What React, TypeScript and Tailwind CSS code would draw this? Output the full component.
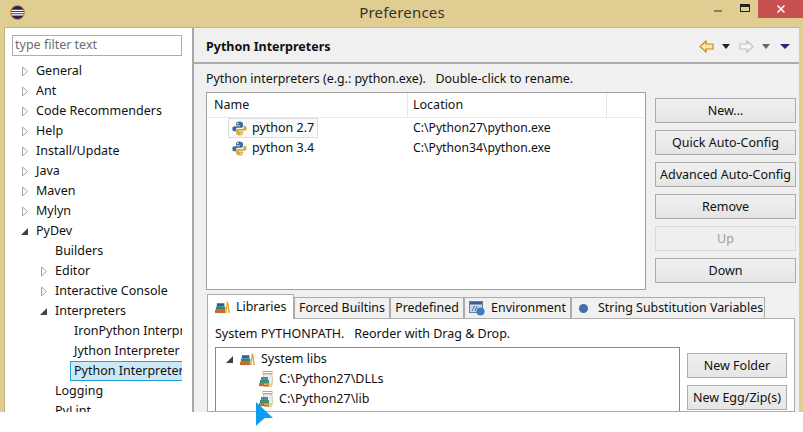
import React from "react";
import { X } from "lucide-react";

const font = "font-['Noto_Sans','Open_Sans',sans-serif]";

const Closed = () => (
  <svg width="6" height="11" viewBox="0 0 6 11" className="shrink-0">
    <path d="M0.5 1 L5.5 5.5 L0.5 10 Z" fill="#fff" stroke="#a6a6a6" />
  </svg>
);

const Open = () => (
  <svg width="7" height="7" viewBox="0 0 7 7" className="shrink-0">
    <path d="M0 7 L7 0 L7 7 Z" fill="#404040" />
  </svg>
);

const PythonIcon = () => (
  <svg width="15" height="15" viewBox="0 0 15 15" className="shrink-0">
    <path d="M7.5 0.5 C4.5 0.5 4 1.6 4 3 V4.5 H8 V5.2 H2.6 C1 5.2 0.3 6.2 0.3 7.7 C0.3 9.3 1 10.3 2.4 10.3 H4 V8.6 C4 7.4 5 6.8 6 6.8 H9.2 C10.2 6.8 11 6 11 5 V3 C11 1.4 9.5 0.5 7.5 0.5 Z" fill="#3d6e99" />
    <path d="M7.5 14.5 C10.5 14.5 11 13.4 11 12 V10.5 H7 V9.8 H12.4 C14 9.8 14.7 8.8 14.7 7.3 C14.7 5.7 14 4.7 12.6 4.7 H11.6 V6.4 C11.6 7.6 10.4 8 9.4 8 H5.8 C4.8 8 4 9 4 10 V12 C4 13.6 5.5 14.5 7.5 14.5 Z" fill="#d8aa45" />
    <circle cx="5.7" cy="2.5" r="0.8" fill="#fff" />
    <circle cx="9.3" cy="12.5" r="0.8" fill="#fff" />
  </svg>
);

const BooksIcon = () => (
  <svg width="15" height="14" viewBox="0 0 16 14" className="shrink-0">
    <rect x="0" y="10" width="11" height="3.5" fill="#c8693a" />
    <rect x="1" y="6.5" width="10" height="3.5" fill="#2f8a6a" />
    <rect x="2" y="3" width="8" height="3.5" fill="#2d5f96" />
    <path d="M11 13.5 L12.5 1 L14 1 L16 13.5 H14.4 L13 5 L12.5 13.5 Z" fill="#e2a92e" />
  </svg>
);

const JarIcon = () => (
  <svg width="14" height="16" viewBox="0 0 14 16" className="shrink-0">
    <rect x="4" y="0.5" width="9" height="2" fill="#fff" stroke="#d2a345" />
    <path d="M4.5 3 H12.5 C13.8 6 13.8 12 12.5 15.5 H5 Z" fill="#e6edf3" stroke="#c9b070" strokeWidth="0.7" />
    <rect x="2" y="6" width="7" height="3" fill="#5a82ad" />
    <rect x="1" y="9" width="9" height="3" fill="#3f8f74" />
    <rect x="0" y="12" width="10" height="3.2" fill="#c8693a" />
    <rect x="5" y="12.6" width="7.5" height="1.2" fill="#e9b95c" />
  </svg>
);

const EnvIcon = () => (
  <svg width="16" height="15" viewBox="0 0 16 15" className="shrink-0">
    <rect x="0.5" y="0.5" width="13" height="11" fill="#c9d6e6" stroke="#6d7f9c" />
    <rect x="1" y="1" width="12" height="2.5" fill="#3d5f96" />
    <path d="M3 10 L5.5 5 M6 10 L8 5" stroke="#4a6a9a" />
    <circle cx="11.5" cy="10.5" r="4" fill="#3b7cc0" />
  </svg>
);

const ArrowIcon = ({ flip, active }: { flip?: boolean; active?: boolean }) => (
  <svg width="15" height="13" viewBox="0 0 15 13" className={flip ? "-scale-x-100" : ""}>
    <path
      d="M1 6.5 L7 1 V4 H14 V9 H7 V12 Z"
      fill={active ? "#fde6a8" : "#f6f6f6"}
      stroke={active ? "#c98a1e" : "#c0c0c0"}
      strokeWidth="1.2"
    />
  </svg>
);

const Caret = ({ color, w = 8 }: { color: string; w?: number }) => (
  <svg width={w} height="5" viewBox="0 0 8 5" preserveAspectRatio="none">
    <path d="M0 0 H8 L4 5 Z" fill={color} />
  </svg>
);

const Btn = ({ label, disabled, w = "w-[141px]" }: { label: string; disabled?: boolean; w?: string }) => (
  <div
    className={`${w} h-[25px] shrink-0 pt-[2px] flex items-center justify-center border border-[#acacac] text-[12.5px] ${
      disabled ? "bg-[#efefef] border-[#d9d9d9] text-[#a0a0a0]" : "bg-gradient-to-b from-[#f0f0f0] to-[#e5e5e5] text-[#111]"
    }`}
  >
    {label}
  </div>
);

const TreeRow = ({
  label,
  level,
  state,
  selected,
}: {
  label: string;
  level: number;
  state?: "open" | "closed";
  selected?: boolean;
}) => (
  <div className="h-5 flex items-center text-[12.5px] text-[#111] whitespace-nowrap">
    <div className={level === 0 ? "w-[31px] shrink-0 flex justify-end pr-[3px]" : level === 1 ? "w-[50px] shrink-0 flex justify-end pr-[3px]" : "w-[69px] shrink-0"}>
      {state === "closed" && <Closed />}
      {state === "open" && <Open />}
    </div>
    <div
      className={
        selected
          ? "h-5 ml-[1px] pl-[3px] w-[112px] shrink-0 bg-[#cbe8f6] border border-[#26a0da] border-r-0 flex items-center"
          : "pl-[5px]"
      }
    >
      {label}
    </div>
  </div>
);

const Tab = ({ children, active, w, left }: { children: React.ReactNode; active?: boolean; w: string; left?: boolean }) => (
  <div
    className={`${w} flex items-center border border-[#acacac] border-b-0 whitespace-nowrap text-[12.4px] text-[#111] ${
      active
        ? "h-[25px] gap-[6px] bg-white pl-[7px] relative z-10"
        : `h-[22px] gap-[6px] bg-[#f0f0f0] mt-[3px] border-b ${left ? "pl-[7px]" : "justify-center"}`
    }`}
  >
    {children}
  </div>
);

export default function App() {
  return (
    <div className={`${font} w-[803px] h-[432px] relative overflow-hidden bg-white`}>
      <div className="h-[412px] bg-[#e0cd92] flex flex-col overflow-hidden">
        {/* title bar */}
        <div className="h-[27px] shrink-0 flex items-start">
          <div className="pl-[10px] pt-[5px] w-[90px]">
            <svg width="15" height="15" viewBox="0 0 15 15">
              <circle cx="7.5" cy="7.5" r="7" fill="#2c2255" stroke="#e79b35" strokeWidth="0.8" />
              <rect x="1.5" y="4.8" width="12" height="1.3" fill="#fff" />
              <rect x="1" y="7" width="13" height="1.3" fill="#fff" />
              <rect x="1.5" y="9.2" width="12" height="1.3" fill="#fff" />
            </svg>
          </div>
          <div className="flex-1 text-center text-[15px] leading-[25px] text-[#333] tracking-[0.2px]">Preferences</div>
          <div className="w-[8px] h-[2px] bg-[#8c7d55] mt-[10px]" />
          <div className="w-[10px] h-[8px] ml-[18px] mt-[4px] border border-t-[3px] border-[#222]" />
          <div className="w-[45px] h-[18px] ml-[8px] bg-[#c75050] flex items-center justify-center">
            <X size={12} strokeWidth={3} color="#fff" />
          </div>
        </div>

        {/* client area */}
        <div className="flex-1 flex ml-[4px] mr-[4px] border-t border-l border-[#c2b27f] min-h-0">
          {/* left tree */}
          <div className="w-[189px] shrink-0 bg-white border-r-2 border-[#a9a9a9] pt-[7px] pl-[7px] pr-[10px] overflow-hidden">
            <div className="h-[21px] border border-[#acacac] flex items-center pl-[2px] text-[12.5px] text-[#6d6d6d]">
              type filter text
            </div>
            <div className="mt-[5px] -ml-[12px] overflow-hidden w-[182px]">
              <TreeRow label="General" level={0} state="closed" />
              <TreeRow label="Ant" level={0} state="closed" />
              <TreeRow label="Code Recommenders" level={0} state="closed" />
              <TreeRow label="Help" level={0} state="closed" />
              <TreeRow label="Install/Update" level={0} state="closed" />
              <TreeRow label="Java" level={0} state="closed" />
              <TreeRow label="Maven" level={0} state="closed" />
              <TreeRow label="Mylyn" level={0} state="closed" />
              <TreeRow label="PyDev" level={0} state="open" />
              <TreeRow label="Builders" level={1} />
              <TreeRow label="Editor" level={1} state="closed" />
              <TreeRow label="Interactive Console" level={1} state="closed" />
              <TreeRow label="Interpreters" level={1} state="open" />
              <TreeRow label="IronPython Interpreter" level={2} />
              <TreeRow label="Jython Interpreter" level={2} />
              <TreeRow label="Python Interpreter" level={2} selected />
              <TreeRow label="Logging" level={1} />
              <TreeRow label="PyLint" level={1} />
            </div>
          </div>

          {/* right page */}
          <div className="flex-1 min-w-0 bg-[#f0f0f0] flex flex-col">
            <div className="h-[36px] shrink-0 border-b-2 border-[#acacac] flex items-center pl-[12px] pr-[9px]">
              <div className="flex-1 font-bold text-[12.5px] text-[#111] pt-[4px]">Python Interpreters</div>
              <div className="flex items-center pt-[2px]">
                <ArrowIcon active />
                <div className="ml-[8px]"><Caret color="#222" /></div>
                <div className="ml-[9px]"><ArrowIcon flip /></div>
                <div className="ml-[8px]"><Caret color="#666" /></div>
                <div className="ml-[10px]"><Caret color="#3a2277" w={10} /></div>
              </div>
            </div>

            <div className="pl-[12px] pr-[3px] pt-[5px] flex-1 min-h-0 flex flex-col">
              <div className="h-[20px] flex items-center text-[12.4px] text-[#111] whitespace-pre">
                Python interpreters (e.g.: python.exe).   Double-click to rename.
              </div>
              <div className="flex mt-[3px] gap-[9px] shrink-0">
                <div className="w-[440px] h-[198px] bg-white border border-[#9f9f9f] text-[12.5px] text-[#111]">
                  <div className="h-[25px] flex items-center border-b border-[#e5ebf2]">
                    <div className="w-[201px] pl-[7px] pt-[1px] h-full flex items-center border-r border-[#e5e5e5]">Name</div>
                    <div className="w-[199px] pl-[5px] pt-[1px] h-full flex items-center border-r border-[#e5e5e5]">Location</div>
                  </div>
                  <div>
                    <div className="h-5 flex items-center">
                      <div className="w-[202px] pl-[21px] flex items-center">
                        <div className="h-5 flex items-center gap-[5px] pl-[3px] pr-[3px] bg-[#fafafa] border border-[#dedede]">
                          <PythonIcon />
                          <span>python 2.7</span>
                        </div>
                      </div>
                      <div className="pl-[4px] text-[12.2px]">C:\Python27\python.exe</div>
                    </div>
                    <div className="h-5 flex items-center">
                      <div className="w-[202px] pl-[25px] flex items-center gap-[5px]">
                        <PythonIcon />
                        <span>python 3.4</span>
                      </div>
                      <div className="pl-[4px] text-[12.2px]">C:\Python34\python.exe</div>
                    </div>
                  </div>
                </div>
                <div className="flex flex-col gap-[7px] pt-[6px]">
                  <Btn label="New..." />
                  <Btn label="Quick Auto-Config" />
                  <Btn label="Advanced Auto-Config" />
                  <Btn label="Remove" />
                  <Btn label="Up" disabled />
                  <Btn label="Down" />
                </div>
              </div>

              {/* tabs */}
              <div className="flex mt-[4px] ml-[1px] shrink-0 h-[25px]">
                <Tab active w="w-[87px]"><BooksIcon /><span>Libraries</span></Tab>
                <Tab w="w-[96px]">Forced Builtins</Tab>
                <Tab w="w-[74px]">Predefined</Tab>
                <Tab w="w-[107px]"><EnvIcon /><span>Environment</span></Tab>
                <Tab left w="w-[194px]">
                  <span className="w-[9px] h-[9px] rounded-full bg-[#3f6fae] mr-[4px]" />
                  <span>String Substitution Variables</span>
                </Tab>
              </div>
              <div className="flex-1 -mt-px ml-[1px] bg-white border border-[#acacac] w-[588px] pl-[7px] overflow-hidden">
                <div className="h-[28px] pt-[2px] flex items-center text-[12.5px] text-[#111] whitespace-pre">
                  System PYTHONPATH.   Reorder with Drag &amp; Drop.
                </div>
                <div className="flex gap-[7px]">
                  <div className="w-[465px] h-[80px] shrink-0 border border-[#828790] text-[12.5px] text-[#111]">
                    <div className="h-5 mt-[1px] flex items-center">
                      <div className="ml-[10px]"><Open /></div>
                      <div className="ml-[7px]"><BooksIcon /></div>
                      <span className="ml-[6px]">System libs</span>
                    </div>
                    <div className="h-5 flex items-center pl-[43px] gap-[6px]"><JarIcon /><span>C:\Python27\DLLs</span></div>
                    <div className="h-5 flex items-center pl-[43px] gap-[6px]"><JarIcon /><span>C:\Python27\lib</span></div>
                  </div>
                  <div className="flex flex-col gap-[7px] pt-[6px]">
                    <Btn label="New Folder" w="w-[100px]" />
                    <Btn label="New Egg/Zip(s)" w="w-[100px]" />
                  </div>
                </div>
              </div>
            </div>
          </div>
        </div>
      </div>

      {/* mouse pointer */}
      <svg width="20" height="28" viewBox="0 0 20 28" className="absolute left-[256px] top-[402px]">
        <path d="M0 0 L17 16 L9 16 L0 24 Z" fill="#0f9bf0" />
        <path d="M0 24 L9 16" stroke="#c8d4dc" strokeWidth="1" />
      </svg>
    </div>
  );
}
